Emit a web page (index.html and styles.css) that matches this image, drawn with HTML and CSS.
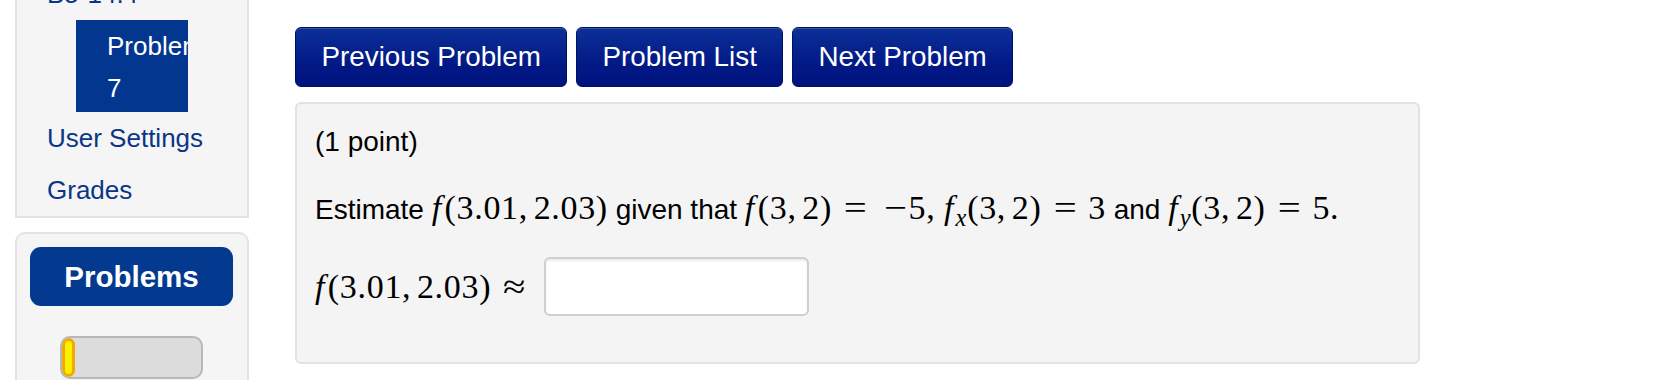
FILE: index.html
```html
<!DOCTYPE html>
<html lang="en">
<head>
<meta charset="utf-8">
<title>Problem 7</title>
<link rel="stylesheet" href="styles.css">
</head>
<body>
<div class="page">
  <aside class="sidebar">
    <div class="panel nav">
      <a class="nav-link sec" href="#">B5-14.4</a>
      <div class="nav-current"><span>Problem 7</span></div>
      <a class="nav-link" href="#">User Settings</a>
      <a class="nav-link" href="#">Grades</a>
    </div>
    <div class="panel probs">
      <div class="probs-title">Problems</div>
      <div class="progress"><div class="progress-fill"></div></div>
    </div>
  </aside>
  <main class="main">
    <div class="btn-row">
      <button class="btn">Previous Problem</button>
      <button class="btn">Problem List</button>
      <button class="btn">Next Problem</button>
    </div>
    <div class="problem">
      <p class="pts">(1 point)</p>
      <p class="stmt">Estimate <span class="math"><i class="fn">f</i>(3.01,<span class="th"></span>2.03)</span> given that <span class="math"><i class="fn">f</i>(3,<span class="th"></span>2)<span class="rel">=</span><span class="minus">−</span>5,<span class="th wide"></span><i class="fn">f</i><i class="sub">x</i>(3,<span class="th"></span>2)<span class="rel">=</span>3</span> and <span class="math"><i class="fn">f</i><i class="sub">y</i>(3,<span class="th"></span>2)<span class="rel">=</span>5.</span></p>
      <div class="answer">
        <span class="math"><i class="fn">f</i>(3.01,<span class="th"></span>2.03)<span class="rel">≈</span></span>
        <input class="ans-input" type="text" aria-label="answer">
      </div>
    </div>
  </main>
</div>
</body>
</html>
```

FILE: styles.css
```css
html, body {
  margin: 0;
  padding: 0;
  background: #ffffff;
  overflow: hidden;
}
body {
  font-family: "Liberation Sans", Arial, Helvetica, sans-serif;
  color: #000;
}
.page {
  display: flex;
  align-items: flex-start;
  padding-left: 15px;
}
.sidebar {
  width: 234px;
  flex: none;
  display: flex;
  flex-direction: column;
  gap: 14px;
}
.panel {
  background: #f5f5f5;
  border: 2px solid #e3e3e3;
}
.nav {
  margin-top: -32px;
  border-top: none;
  padding-left: 30px;
  display: flex;
  flex-direction: column;
}
.nav-link {
  display: block;
  font-size: 26px;
  line-height: 32px;
  padding: 10px 0;
  color: #0b3586;
  text-decoration: none;
}
.nav-link.sec {
  padding-bottom: 10px;
}
.nav-current {
  margin-left: 29px;
  width: 112px;
  height: 92px;
  box-sizing: border-box;
  padding: 5px 0 0 31px;
  background: #03378f;
  color: #fff;
  font-size: 26px;
  line-height: 42px;
  overflow: hidden;
}
.nav-current span {
  display: block;
  width: 70px;
}
.probs {
  border-radius: 10px;
  padding: 13px 0 20px 13px;
  height: 180px;
}
.probs-title {
  width: 203px;
  height: 59px;
  border-radius: 11px;
  background: #033a8f;
  color: #fff;
  font-weight: bold;
  font-size: 29.5px;
  line-height: 59px;
  text-align: center;
}
.progress {
  margin: 30px 0 0 30px;
  width: 143px;
  height: 43px;
  box-sizing: border-box;
  border: 2px solid #b8b8b8;
  border-radius: 10px;
  background: #dcdcdc;
  overflow: hidden;
}
.progress-fill {
  width: 13px;
  height: 100%;
  box-sizing: border-box;
  background: #ffee00;
  border: 3px solid #f2a900;
  border-radius: 8px;
}
.main {
  margin-left: 46px;
  display: flex;
  flex-direction: column;
}
.btn-row {
  display: flex;
  gap: 8.5px;
  margin-top: 27px;
}
.btn {
  height: 60px;
  padding: 0 25.5px;
  font-family: "Liberation Sans", Arial, Helvetica, sans-serif;
  font-size: 27.8px;
  color: #fff;
  background: linear-gradient(#0c2f98, #021a86 60%, #00137e);
  border: 1px solid #000f66;
  border-radius: 6px;
  box-shadow: inset 0 1px 0 rgba(255, 255, 255, 0.18);
}
.problem {
  margin-top: 15px;
  width: 1125px;
  height: 262px;
  box-sizing: border-box;
  background: #f4f4f4;
  border: 2px solid #e2e2e2;
  border-radius: 6px;
  padding: 18px 18px 0 18px;
  font-size: 28px;
}
.problem p {
  margin: 0;
  line-height: 40px;
}
.pts {
  margin-bottom: 28px !important;
}
.math {
  font-family: "Liberation Serif", "Times New Roman", serif;
  font-size: 34px;
  line-height: 1;
  letter-spacing: 0.02em;
  white-space: nowrap;
}
.fn {
  font-style: italic;
  margin-right: 0.08em;
}
.sub {
  font-style: italic;
  font-size: 0.72em;
  vertical-align: -0.28em;
  line-height: 0;
  margin-left: -0.05em;
}
.th {
  display: inline-block;
  width: 0.167em;
}
.th.wide {
  width: 0.25em;
}
.rel {
  display: inline-block;
  width: 0.778em;
  text-align: center;
  letter-spacing: 0;
  margin: 0 0.3em;
  transform: scaleX(1.2);
}
.minus {
  display: inline-block;
  width: 0.778em;
  text-align: center;
  letter-spacing: 0;
  margin-left: 0.1em;
  transform: scaleX(1.2);
}
.answer {
  margin-top: 27px;
  display: flex;
  align-items: center;
}
.ans-input {
  margin-left: 6px;
  width: 265px;
  height: 59px;
  box-sizing: border-box;
  border: 2px solid #cfcfcf;
  border-radius: 6px;
  background: #fff;
  box-shadow: inset 0 2px 2px rgba(0, 0, 0, 0.08);
}
```
